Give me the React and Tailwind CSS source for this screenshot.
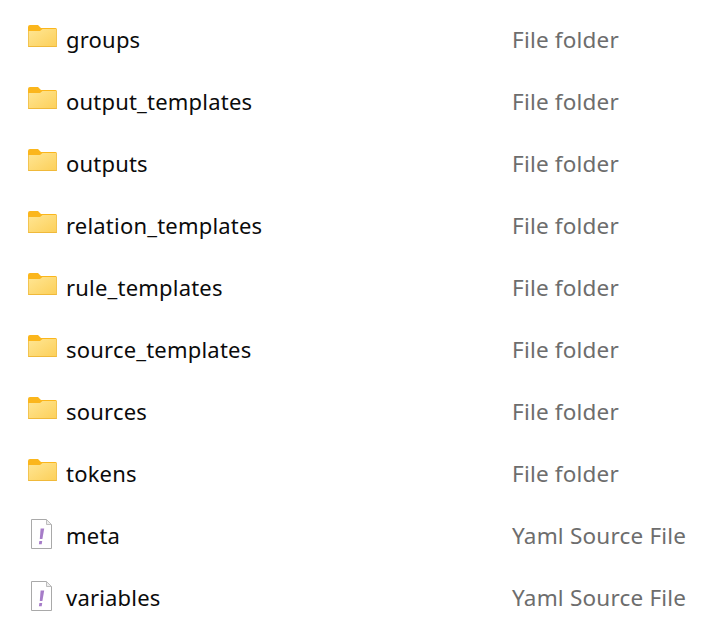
const ROWS = [
  { name: 'groups', type: 'File folder' },
  { name: 'output_templates', type: 'File folder' },
  { name: 'outputs', type: 'File folder' },
  { name: 'relation_templates', type: 'File folder' },
  { name: 'rule_templates', type: 'File folder' },
  { name: 'source_templates', type: 'File folder' },
  { name: 'sources', type: 'File folder' },
  { name: 'tokens', type: 'File folder' },
  { name: 'meta', type: 'Yaml Source File', yaml: true },
  { name: 'variables', type: 'Yaml Source File', yaml: true },
]

function FolderIcon() {
  return (
    <svg width="29" height="24" viewBox="0 0 29 24" className="block">
      <defs>
        <linearGradient id="folderFill" x1="0" y1="0" x2="1" y2="1">
          <stop offset="0" stopColor="#ffe694" />
          <stop offset="1" stopColor="#fccf58" />
        </linearGradient>
      </defs>
      <path d="M0 3 Q0 1 2 1 H10 L13 4 H27.5 Q29 4 29 5.5 V10 H0 Z" fill="#fbb61c" />
      <path d="M0 7 H12 L14.5 5 H29 V22 Q29 23 28 23 H1 Q0 23 0 22 Z" fill="url(#folderFill)" />
      <path d="M0 22.5 H29" stroke="#f0b93a" strokeWidth="1" />
      <path d="M28.5 5 V22.5" stroke="#f3c451" strokeWidth="1" />
      <path d="M0.5 7 V22.5" stroke="#f3c451" strokeWidth="1" />
    </svg>
  )
}

function YamlIcon() {
  return (
    <svg width="23" height="32" viewBox="0 0 23 32" className="block">
      <path d="M1.5 1.5 H16.5 L21.5 6.5 V30.5 H1.5 Z" fill="#fff" stroke="#a9a9a9" strokeWidth="1" />
      <path d="M16.5 1.5 V6.5 H21.5 Z" fill="#ececec" stroke="#bdbdbd" strokeWidth="1" />
      <path d="M10.6 10.5 H14.2 L12.4 21 H9.8 Z" fill="#a67cc8" />
      <path d="M9.4 23 H12.2 L11.7 26.2 H8.9 Z" fill="#a67cc8" />
    </svg>
  )
}

export default function App() {
  return (
    <div className="w-[705px] h-[635px] bg-white pt-[8px] overflow-hidden font-['Noto_Sans','Open_Sans',sans-serif]">
      {ROWS.map(row => (
        <div key={row.name} className="flex items-center h-[62px]">
          <div className="w-[66px] pl-[28px] shrink-0">
            {row.yaml ? <div className="pl-[2px] mt-[-3px]"><YamlIcon /></div> : <div className="mt-[-6px]"><FolderIcon /></div>}
          </div>
          <div className="w-[446px] shrink-0 text-[22px] text-[#0b0b0b] tracking-[0.2px]">{row.name}</div>
          <div className="text-[22.5px] text-[#6d6d6d] whitespace-nowrap tracking-[0.2px] pt-[2px]">{row.type}</div>
        </div>
      ))}
    </div>
  )
}
